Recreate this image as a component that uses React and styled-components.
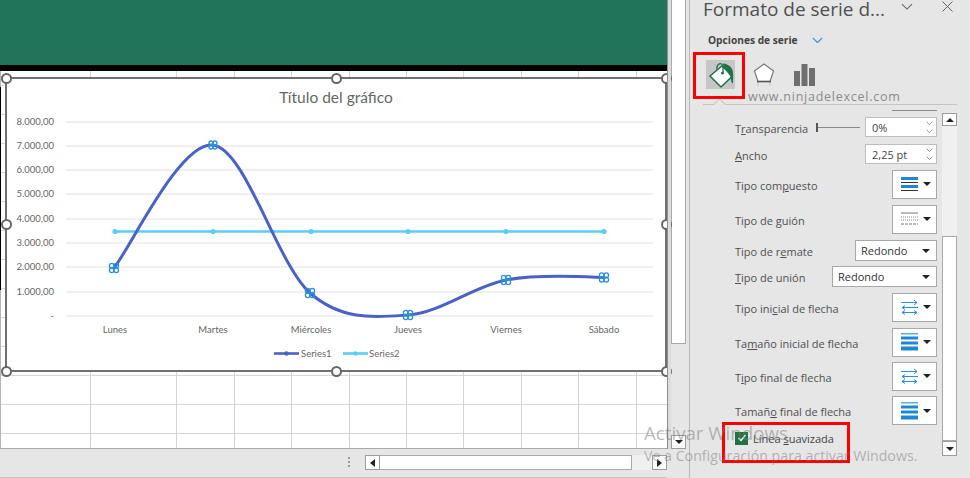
import React from "react";
import styled, { createGlobalStyle } from "styled-components";

const GlobalStyle = createGlobalStyle`
  html, body { margin: 0; padding: 0; background: #e6e6e6; overflow: hidden; }
  * { box-sizing: border-box; }
`;

const colLines = [89, 175, 233, 290, 348, 405, 462, 520, 577, 635];
const colBackground = colLines
  .map((x) => `linear-gradient(#d4d4d4, #d4d4d4) ${x}px 0 / 1px 100% no-repeat`)
  .join(", ");

const Page = styled.div`
  display: flex;
  width: 970px;
  height: 478px;
  position: relative;
  overflow: hidden;
  background: #e6e6e6;
  font-family: "Open Sans", "Liberation Sans", sans-serif;
`;

const Workspace = styled.div`
  width: 667px;
  display: flex;
  flex-direction: column;
  flex: none;
`;

const Banner = styled.div`
  height: 65px;
  background: #21735a;
  flex: none;
`;

const BlackBar = styled.div`
  height: 6px;
  background: #000;
  flex: none;
`;

const Sheet = styled.div`
  position: relative;
  height: 378px;
  flex: none;
  border-left: 1px solid #b5b5b5;
  border-bottom: 1px solid #a9a9a9;
  background: ${colBackground},
    repeating-linear-gradient(
      to bottom,
      #fff 0,
      #fff 14px,
      #d8d8d8 14px,
      #d8d8d8 15px,
      #fff 15px,
      #fff 29px
    );
  &::before {
    content: "";
    position: absolute;
    left: -1px;
    top: 16px;
    width: 1px;
    height: 203px;
    background: #000;
  }
`;

const ChartWindow = styled.div`
  position: absolute;
  left: 4px;
  top: 6px;
  width: 662px;
  height: 295px;
  background: #fff;
  border: 2px solid #707070;
`;

const ChartSvg = styled.svg`
  display: block;
  width: 658px;
  height: 291px;
  text {
    font-family: Lato, "Liberation Sans", sans-serif;
    fill: #666;
  }
`;

const Handle = styled.span`
  position: absolute;
  left: calc(${(p) => p.$x}% + ${(p) => (p.$x - 50) / 50}px);
  top: calc(${(p) => p.$y}% + ${(p) => (p.$y - 50) / 50}px);
  width: 11px;
  height: 11px;
  margin: -5.5px 0 0 -5.5px;
  border-radius: 50%;
  border: 2px solid #666;
  background: #fff;
`;

const BottomBar = styled.div`
  flex: 1;
  display: flex;
  align-items: flex-start;
  padding: 6px 0 0 348px;
  background: #e6e6e6;
  border-bottom: 1px solid #c6c6c6;
  height: 28px;
`;

const Grip = styled.div`
  width: 2px;
  height: 11px;
  margin-top: 2px;
  background: repeating-linear-gradient(to bottom, #9a9a9a 0, #9a9a9a 2px, transparent 2px, transparent 4px);
`;

const HScroll = styled.div`
  display: flex;
  margin-left: 15px;
  width: 302px;
  height: 15px;
  background: #f0f0f0;
`;

const ArrowBox = styled.div`
  width: ${(p) => p.$w || 15}px;
  height: ${(p) => p.$h || 15}px;
  flex: none;
  background: #fff;
  border: 1px solid #9c9c9c;
  display: flex;
  align-items: center;
  justify-content: center;
`;

const HThumb = styled.div`
  width: 252px;
  flex: none;
  background: #fff;
  border: 1px solid #a9a9a9;
  border-left: 0;
`;

const HTrack = styled.div`
  flex: 1;
`;

const Tri = styled.span`
  width: 0;
  height: 0;
  display: block;
  ${(p) =>
    p.$dir === "left" &&
    "border-top: 4px solid transparent; border-bottom: 4px solid transparent; border-right: 5px solid #222;"}
  ${(p) =>
    p.$dir === "right" &&
    "border-top: 4px solid transparent; border-bottom: 4px solid transparent; border-left: 5px solid #222;"}
  ${(p) =>
    p.$dir === "up" &&
    "border-left: 4px solid transparent; border-right: 4px solid transparent; border-bottom: 4px solid #222;"}
  ${(p) =>
    p.$dir === "down" &&
    "border-left: 4px solid transparent; border-right: 4px solid transparent; border-top: 4px solid #222;"}
`;

const VScroll = styled.div`
  width: 18px;
  flex: none;
  margin-left: 4px;
  display: flex;
  flex-direction: column;
  align-items: flex-start;
`;

const VThumb = styled.div`
  width: 15px;
  height: 344px;
  background: #fff;
  border: 1px solid #a9a9a9;
  border-top: 0;
`;

const SheetEdge = styled.div`
  width: 4px;
  position: absolute;
  left: 667px;
  top: 0;
  height: 449px;
  background: #dcdcdc;
  border-left: 1px solid #8f8f8f;
`;

const VSpacer = styled.div`
  flex: none;
  height: 91px;
`;

const Pane = styled.div`
  flex: 1;
  border-left: 1px solid #b9b9b9;
  display: flex;
  flex-direction: column;
  position: relative;
  color: #444;
`;

const PaneHead = styled.div`
  height: 30px;
  display: flex;
  padding: 0 0 12px 13px;
`;

const PaneTitle = styled.div`
  font-size: 19px;
  font-weight: 400;
  color: #505050;
  white-space: nowrap;
  line-height: 18px;
  width: 198px;
  flex: none;
`;

const HeadIcons = styled.div`
  display: flex;
  align-items: flex-start;
  gap: 29px;
  padding-top: 1px;
`;

const ChevronSlot = styled.div`
  padding-top: 2px;
  line-height: 0;
`;

const SeriesOptions = styled.div`
  display: flex;
  align-items: center;
  gap: 14px;
  height: 18px;
  margin-top: 1px;
  padding-left: 18px;
  font-size: 10.2px;
  font-weight: 700;
  color: #444;
`;

const IconTabs = styled.div`
  display: flex;
  align-items: center;
  padding: 10px 0 0 16px;
  height: 41px;
`;

const TabIcon = styled.div`
  width: 29px;
  height: 29px;
  display: flex;
  align-items: center;
  justify-content: center;
  margin-right: ${(p) => p.$mr || 0}px;
  background: ${(p) => (p.$active ? "#c6c6c6" : "transparent")};
`;

const Divider = styled.div`
  position: relative;
  margin: 14px 0 0 13px;
  width: 254px;
  height: 1px;
  background: #c4c4c4;
  &::after {
    content: "";
    position: absolute;
    left: 12px;
    top: -4px;
    width: 8px;
    height: 8px;
    background: #e6e6e6;
    border-left: 1px solid #c4c4c4;
    border-top: 1px solid #c4c4c4;
    transform: rotate(45deg);
  }
`;

const Body = styled.div`
  display: flex;
  padding-left: 45px;
  height: 372px;
`;

const Form = styled.div`
  width: 202px;
  flex: none;
  padding-top: 5px;
  position: relative;
`;

const GroupEnd = styled.div`
  height: 1px;
  width: 45px;
  margin-left: 157px;
  background: #8d8d8d;
`;

const Row = styled.div`
  display: flex;
  align-items: center;
  height: ${(p) => p.$h}px;
  margin-top: ${(p) => p.$mt}px;
`;

const Label = styled.span`
  font-size: 11px;
  color: #505050;
  white-space: nowrap;
  padding-top: 2px;
  margin-right: auto;
`;

const Key = styled.span`
  text-decoration: underline;
`;

const SliderWrap = styled.div`
  display: flex;
  align-items: center;
  width: 44px;
  margin-right: 5px;
  height: 9px;
  &::before {
    content: "";
    width: 2px;
    height: 9px;
    background: #555;
    flex: none;
  }
  &::after {
    content: "";
    flex: 1;
    height: 1px;
    background: #8a8a8a;
  }
`;

const Spin = styled.div`
  width: 72px;
  height: 20px;
  flex: none;
  display: flex;
  align-items: center;
  justify-content: space-between;
  padding: 0 3px 0 6px;
  background: #fff;
  border: 1px solid #bdbdbd;
  font-size: 11px;
  color: #444;
`;

const SpinArrows = styled.div`
  display: flex;
  flex-direction: column;
  gap: 4px;
`;

const IconBtn = styled.div`
  width: 45px;
  height: 29px;
  display: flex;
  align-items: center;
  padding-left: 8px;
  gap: 5px;
  background: #fff;
  border: 1px solid #a8a8a8;
`;

const SelectBox = styled.div`
  width: ${(p) => p.$w}px;
  height: 21px;
  flex: none;
  display: flex;
  align-items: center;
  justify-content: space-between;
  padding: 0 6px 0 5px;
  background: #fff;
  border: 1px solid #a8a8a8;
  font-size: 11px;
  color: #333;
`;

const CheckRow = styled.div`
  display: flex;
  align-items: center;
  gap: 5px;
  margin-top: 5px;
  height: 16px;
  font-size: 11px;
  font-weight: 500;
  color: #444;
`;

const CheckBox = styled.div`
  width: 13px;
  height: 13px;
  background: #217346;
  display: flex;
  align-items: center;
  justify-content: center;
`;

const PaneScroll = styled.div`
  width: 15px;
  margin-left: 5px;
  display: flex;
  flex-direction: column;
  padding-top: 8px;
`;

const PaneTrack = styled.div`
  height: 110px;
  background: #f0f0f0;
`;

const PaneThumb = styled.div`
  height: 205px;
  background: #fff;
  border: 1px solid #a9a9a9;
`;

const Highlight = styled.div`
  position: absolute;
  left: ${(p) => p.$l}px;
  top: ${(p) => p.$t}px;
  width: ${(p) => p.$w}px;
  height: ${(p) => p.$h}px;
  border: 3px solid #f00;
`;

const SiteMark = styled.div`
  position: absolute;
  left: 748px;
  top: 88px;
  font-size: 12.5px;
  letter-spacing: 0.75px;
  color: #8b8b8b;
  white-space: nowrap;
`;

const ActivateTitle = styled.div`
  position: absolute;
  left: 644px;
  top: 420px;
  font-size: 18.7px;
  color: rgba(120, 120, 120, 0.5);
  white-space: nowrap;
`;

const ActivateText = styled.div`
  position: absolute;
  left: 644px;
  top: 446px;
  font-size: 14.2px;
  color: rgba(120, 120, 120, 0.5);
  white-space: nowrap;
`;

const gridY = [122, 146, 170, 194, 219, 243, 267, 292, 316];
const axisLabels = ["8.000,00", "7.000,00", "6.000,00", "5.000,00", "4.000,00", "3.000,00", "2.000,00", "1.000,00", "-"];
const days = [
  ["Lunes", 115],
  ["Martes", 213],
  ["Miércoles", 311],
  ["Jueves", 408],
  ["Viernes", 506],
  ["Sábado", 604],
];
const points1 = [
  [114, 268, 2.3],
  [213, 145, 2],
  [310, 293, 2.3],
  [408, 315, 2.3],
  [506, 280, 2.3],
  [604, 277.5, 2.3],
];
const curve =
  "M114,268 C130.5,247.5 180.3,140.8 213,145 C245.7,149.2 277.5,264.7 310,293 C342.5,321.3 375.3,317.2 408,315 C440.7,312.8 473.3,286.3 506,280 C538.7,273.7 588,277 604,277.5";

const SelectionMarker = ({ x, y, r }) => (
  <g fill="none" stroke="#2a8fdf" strokeWidth="1.3">
    <circle cx={x - r} cy={y - r} r={r} />
    <circle cx={x + r} cy={y - r} r={r} />
    <circle cx={x - r} cy={y + r} r={r} />
    <circle cx={x + r} cy={y + r} r={r} />
  </g>
);

const Chart = () => (
  <ChartSvg viewBox="7 79 658 291">
    <text x="336" y="103" fontSize="15.5" textAnchor="middle">
      Título del gráfico
    </text>
    {gridY.map((y, i) => (
      <g key={y}>
        <line x1="66" x2="653" y1={y} y2={y} stroke="#e2e2e2" strokeWidth="1" />
        <text x="54" y={y + 3} fontSize="9.5" textAnchor="end">
          {axisLabels[i]}
        </text>
      </g>
    ))}
    {days.map(([d, x]) => (
      <text key={d} x={x} y="333" fontSize="9.5" textAnchor="middle">
        {d}
      </text>
    ))}
    <line x1="115" x2="604" y1="231.5" y2="231.5" stroke="#5bcdf7" strokeWidth="2.6" />
    {days.map(([d, x]) => (
      <circle key={d} cx={x} cy="231.5" r="2.6" fill="#5bcdf7" />
    ))}
    <path d={curve} fill="none" stroke="#4a62c8" strokeWidth="3" strokeLinecap="round" />
    {points1.map(([x, y, r]) => (
      <SelectionMarker key={x} x={x} y={y} r={r} />
    ))}
    <line x1="274" x2="299" y1="353.5" y2="353.5" stroke="#4a62c8" strokeWidth="2.6" />
    <circle cx="286.5" cy="353.5" r="2.2" fill="#4a62c8" />
    <text x="301" y="356.5" fontSize="9.5">
      Series1
    </text>
    <line x1="343" x2="368" y1="353.5" y2="353.5" stroke="#5bcdf7" strokeWidth="2.6" />
    <circle cx="355.5" cy="353.5" r="2.2" fill="#5bcdf7" />
    <text x="369" y="356.5" fontSize="9.5">
      Series2
    </text>
  </ChartSvg>
);

const BucketIcon = () => (
  <svg width="29" height="29" viewBox="0 0 29 29">
    <path d="M16 6 L26.5 16 L15 27 L4 16 Z" fill="#fff" stroke="#217346" strokeWidth="1.5" />
    <path d="M11 10 C10 3 16 2 17 6 L17 12" fill="none" stroke="#217346" strokeWidth="1.3" />
    <circle cx="16.5" cy="13" r="1.5" fill="#217346" />
    <path d="M17 3.5 C23 4 27 8 27 13 L27 23 C25.5 24 25 20 24.5 16.5 L17.5 7 Z" fill="#217346" />
  </svg>
);

const PentagonIcon = () => (
  <svg width="22" height="23" viewBox="0 0 22 23">
    <path d="M11 1 L20.5 8 L17 18.5 L5 18.5 L1.5 8 Z" fill="#fff" stroke="#7a7a7a" strokeWidth="1.2" />
    <line x1="5" x2="5" y1="18" y2="22.5" stroke="#bbb" strokeWidth="1" />
    <line x1="17" x2="17" y1="18" y2="22.5" stroke="#bbb" strokeWidth="1" />
    <line x1="4" x2="18" y1="18.5" y2="18.5" stroke="#555" strokeWidth="1.6" />
  </svg>
);

const BarsIcon = () => (
  <svg width="21" height="22" viewBox="0 0 21 22">
    <rect x="0" y="7" width="6" height="15" fill="#6f6f6f" />
    <rect x="7.5" y="0" width="6" height="22" fill="#6f6f6f" />
    <rect x="15" y="4" width="6" height="18" fill="#6f6f6f" />
  </svg>
);

const Chevron = ({ color = "#666", size = 12, sw = 1.1 }) => (
  <svg width={size} height={size * 0.6} viewBox="0 0 12 7">
    <path d="M1 1 L6 6 L11 1" fill="none" stroke={color} strokeWidth={sw} />
  </svg>
);

const CloseIcon = () => (
  <svg width="11" height="11" viewBox="0 0 11 11">
    <path d="M0.5 0.5 L10.5 10.5 M10.5 0.5 L0.5 10.5" stroke="#666" strokeWidth="1" />
  </svg>
);

const CompoundIcon = () => (
  <svg width="17" height="15" viewBox="0 0 17 15">
    <rect x="0" y="0" width="17" height="3" fill="#1f87d6" />
    <rect x="0" y="5" width="17" height="1" fill="#333" />
    <rect x="0" y="8" width="17" height="3" fill="#1f87d6" />
    <rect x="0" y="13" width="17" height="1" fill="#333" />
  </svg>
);

const DashIcon = () => (
  <svg width="17" height="15" viewBox="0 0 17 15">
    <line x1="0" x2="17" y1="1" y2="1" stroke="#777" />
    <line x1="0" x2="17" y1="5" y2="5" stroke="#888" strokeDasharray="1 1" />
    <line x1="0" x2="17" y1="8" y2="8" stroke="#888" strokeDasharray="1 1" />
    <line x1="0" x2="17" y1="12" y2="12" stroke="#777" strokeDasharray="3 1" />
  </svg>
);

const ArrowsIcon = () => (
  <svg width="17" height="17" viewBox="0 0 17 17" fill="none" stroke="#2a8fdf" strokeWidth="1">
    <path d="M0 3.5 H16 M13 1 L16 3.5 L13 6" />
    <path d="M17 8.5 H1 M4 6.5 L1 8.5 L4 10.5" />
    <path d="M1 13.5 H16 M4 11.5 L1 13.5 L4 15.5 M13 11.5 L16 13.5 L13 15.5" />
  </svg>
);

const SizeIcon = () => (
  <svg width="17" height="18" viewBox="0 0 17 18">
    <rect x="0" y="0" width="17" height="1.5" fill="#1f87d6" opacity="0.7" />
    <rect x="0" y="3.5" width="17" height="3" fill="#1f87d6" />
    <rect x="0" y="8.5" width="17" height="3" fill="#1f87d6" />
    <rect x="0" y="13.5" width="17" height="4" fill="#1f87d6" />
  </svg>
);

const Dropdown = ({ icon }) => (
  <IconBtn>
    {icon}
    <Tri $dir="down" />
  </IconBtn>
);

const Select = ({ w, value }) => (
  <SelectBox $w={w}>
    {value}
    <Tri $dir="down" />
  </SelectBox>
);

const SpinBox = ({ value }) => (
  <Spin>
    {value}
    <SpinArrows>
      <Chevron size={7} color="#555" />
      <Chevron size={7} color="#555" />
    </SpinArrows>
  </Spin>
);

const rows = [
  {
    h: 20, mt: 6,
    label: <>T<Key>r</Key>ansparencia</>,
    control: (
      <>
        <SliderWrap />
        <SpinBox value="0%" />
      </>
    ),
  },
  { h: 20, mt: 7, label: <><Key>A</Key>ncho</>, control: <SpinBox value="2,25 pt" /> },
  { h: 28, mt: 6, label: <>Tipo com<Key>p</Key>uesto</>, control: <Dropdown icon={<CompoundIcon />} /> },
  { h: 28, mt: 7, label: <>Tipo de <Key>g</Key>uión</>, control: <Dropdown icon={<DashIcon />} /> },
  { h: 21, mt: 7, label: <>Tipo de r<Key>e</Key>mate</>, control: <Select w={82} value="Redondo" /> },
  { h: 21, mt: 5, label: <><Key>T</Key>ipo de unión</>, control: <Select w={105} value="Redondo" /> },
  { h: 28, mt: 6, label: <>Tipo ini<Key>c</Key>ial de flecha</>, control: <Dropdown icon={<ArrowsIcon />} /> },
  { h: 28, mt: 7, label: <>Ta<Key>m</Key>año inicial de flecha</>, control: <Dropdown icon={<SizeIcon />} /> },
  { h: 28, mt: 6, label: <>T<Key>i</Key>po final de flecha</>, control: <Dropdown icon={<ArrowsIcon />} /> },
  { h: 29, mt: 6, label: <>Tamañ<Key>o</Key> final de flecha</>, control: <Dropdown icon={<SizeIcon />} /> },
];

export default function App() {
  return (
    <Page>
      <GlobalStyle />
      <Workspace>
        <Banner />
        <BlackBar />
        <Sheet>
          <ChartWindow>
            <Chart />
            <Handle $x={0} $y={0} />
            <Handle $x={50} $y={0} />
            <Handle $x={100} $y={0} />
            <Handle $x={0} $y={50} />
            <Handle $x={100} $y={50} />
            <Handle $x={0} $y={100} />
            <Handle $x={50} $y={100} />
            <Handle $x={100} $y={100} />
          </ChartWindow>
        </Sheet>
        <BottomBar>
          <Grip />
          <HScroll>
            <ArrowBox>
              <Tri $dir="left" />
            </ArrowBox>
            <HThumb />
            <HTrack />
            <ArrowBox>
              <Tri $dir="right" />
            </ArrowBox>
          </HScroll>
        </BottomBar>
      </Workspace>
      <SheetEdge />
      <VScroll>
        <VThumb />
        <VSpacer />
        <ArrowBox $w={15} $h={14}>
          <Tri $dir="down" />
        </ArrowBox>
      </VScroll>
      <Pane>
        <PaneHead>
          <PaneTitle>Formato de serie d...</PaneTitle>
          <HeadIcons>
            <ChevronSlot>
              <Chevron size={12} />
            </ChevronSlot>
            <CloseIcon />
          </HeadIcons>
        </PaneHead>
        <SeriesOptions>
          Opciones de serie
          <Chevron size={11} color="#3f9ae0" sw={1.4} />
        </SeriesOptions>
        <IconTabs>
          <TabIcon $active $mr={14}>
            <BucketIcon />
          </TabIcon>
          <TabIcon $mr={12}>
            <PentagonIcon />
          </TabIcon>
          <TabIcon>
            <BarsIcon />
          </TabIcon>
        </IconTabs>
        <Divider />
        <Body>
          <Form>
            <GroupEnd />
            {rows.map((r, i) => (
              <Row key={i} $h={r.h} $mt={r.mt}>
                <Label>{r.label}</Label>
                {r.control}
              </Row>
            ))}
            <CheckRow>
              <CheckBox>
                <svg width="10" height="10" viewBox="0 0 10 10">
                  <path d="M1.5 5 L4 7.5 L8.5 2" fill="none" stroke="#fff" strokeWidth="1.4" />
                </svg>
              </CheckBox>
              <span>
                Línea <Key>s</Key>uavizada
              </span>
            </CheckRow>
          </Form>
          <PaneScroll>
            <ArrowBox $w={15} $h={13}>
              <Tri $dir="up" />
            </ArrowBox>
            <PaneTrack />
            <PaneThumb />
            <ArrowBox $w={15} $h={15}>
              <Tri $dir="down" />
            </ArrowBox>
          </PaneScroll>
        </Body>
      </Pane>
      <Highlight $l={693} $t={52} $w={52} $h={47} />
      <Highlight $l={722} $t={422} $w={128} $h={41} />
      <SiteMark>www.ninjadelexcel.com</SiteMark>
      <ActivateTitle>Activar Windows</ActivateTitle>
      <ActivateText>Ve a Configuración para activar Windows.</ActivateText>
    </Page>
  );
}
